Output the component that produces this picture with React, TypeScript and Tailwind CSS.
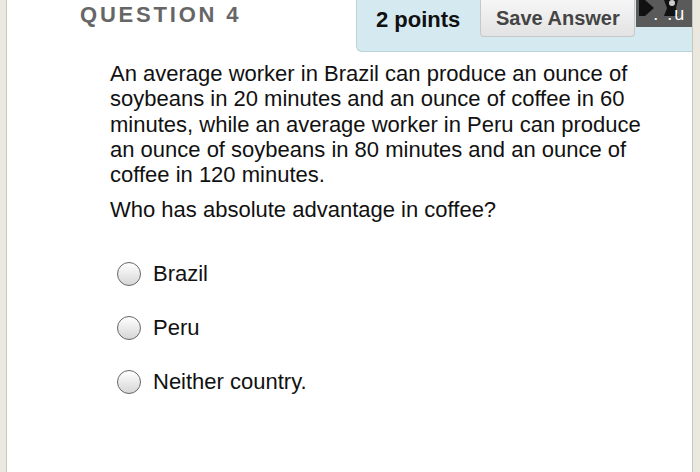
import React from "react";

function Radio({ label }: { label: string }) {
  return (
    <div className="flex items-center h-[54px]">
      <div className="w-[24px] h-[24px] rounded-full border-[1.5px] border-[#666] bg-gradient-to-b from-[#ffffff] to-[#d6d6d6] ml-[7px] shrink-0" />
      <span className="ml-[12px] text-[22px] text-[#111] leading-none">{label}</span>
    </div>
  );
}

export default function App() {
  return (
    <div
      className="w-[700px] h-[472px] flex bg-[#ebe8df] overflow-hidden"
      style={{ fontFamily: '"Liberation Sans", Arial, sans-serif' }}
    >
      <div className="w-[7px] bg-[#ebe8df] border-r border-[#c9c6bf]" />
      <div className="flex-1 bg-white flex flex-col relative">
        <div className="flex items-start h-[55px]">
          <div className="pl-[73px] pt-[2px] text-[22px] leading-[26px] font-bold tracking-[2.8px] text-[#666]">
            QUESTION 4
          </div>
          <div className="ml-auto w-[336px] h-[52px] bg-[#d4eaf0] border border-[#bcd3d9] border-t-0 border-r-0 rounded-bl-[6px] flex items-start">
            <div className="pl-[19px] pt-[3px] text-[22px] font-bold text-[#111]">2 points</div>
            <div className="ml-[20px] w-[155px] h-[37px] bg-gradient-to-b from-[#f6f6f6] to-[#e3e3e3] border border-[#c8c8c8] border-t-0 rounded-b-[4px] flex items-center justify-center text-[20px] font-bold text-[#444]">
              Save Answer
            </div>
            <div className="ml-[1px] flex-1 h-[27px] bg-[#5a5a5a] relative overflow-hidden">
              <svg width="56" height="27" viewBox="0 0 56 27" className="absolute left-0 top-0">
                <polygon points="3,0 9,0 18,8 9,16 3,16" fill="#111" />
                <polygon points="28,0 42,0 40,8 42,16 28,16 31,8" fill="#111" />
                <circle cx="36" cy="3" r="3" fill="#ccc" />
              </svg>
              <span className="absolute left-[17px] top-[5px] text-[18px] text-white leading-none tracking-[2px]">. .u</span>
            </div>
          </div>
        </div>
        <div className="pl-[103px] pr-[37px] pt-[6px] text-[22px] leading-[25.3px] text-[#111]">
          <p>
            An average worker in Brazil can produce an ounce of soybeans in 20 minutes and an ounce of coffee in 60 minutes, while an average worker in Peru can produce an ounce of soybeans in 80 minutes and an ounce of coffee in 120 minutes.
          </p>
          <p className="mt-[10px]">Who has absolute advantage in coffee?</p>
          <div className="mt-[24px] flex flex-col">
            <Radio label="Brazil" />
            <Radio label="Peru" />
            <Radio label="Neither country." />
          </div>
        </div>
      </div>
      <div className="w-[8px] bg-[#ebe8df] border-l border-[#c9c6bf]" />
    </div>
  );
}
